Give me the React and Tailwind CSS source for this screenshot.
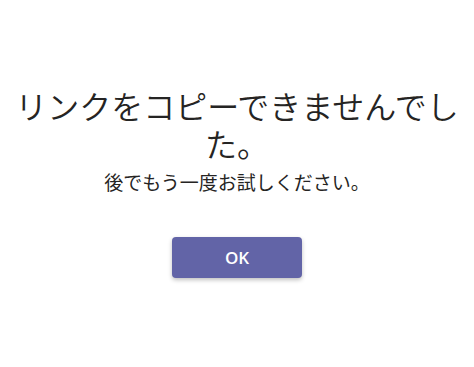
export default function App() {
  return (
    <div className="w-[474px] h-[367px] bg-white flex flex-col items-center pt-[86px] px-3 text-[#252423] font-['Noto_Sans_CJK_JP','Noto_Sans',sans-serif]">
      <h1 className="text-[32px] leading-[38px] font-[350] text-center">
        リンクをコピーできませんでした。
      </h1>
      <p className="mt-[6px] text-[19px] leading-[28px] font-normal text-center">
        後でもう一度お試しください。
      </p>
      <button className="mt-[41px] w-[130px] h-[41px] rounded-[4px] bg-[#6264a7] text-white text-[17px] font-semibold font-['Open_Sans',sans-serif] shadow-[0_2px_4px_rgba(0,0,0,0.25)]">
        OK
      </button>
    </div>
  );
}
